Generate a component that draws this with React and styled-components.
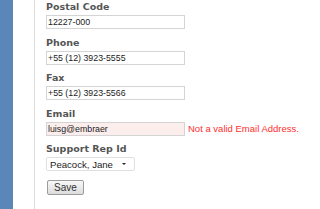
import styled, { createGlobalStyle } from 'styled-components';

const GlobalStyle = createGlobalStyle`
  html, body {
    margin: 0;
    padding: 0;
    background: #fff;
  }
  body {
    font-family: "Liberation Sans", Arial, sans-serif;
    font-size: 10px;
  }
`;

const Page = styled.div`
  display: flex;
  width: 320px;
  height: 209px;
  overflow: hidden;
`;

const Sidebar = styled.div`
  width: 13px;
  flex: none;
  background: #5b87b8;
`;

const Gutter = styled.div`
  width: 21px;
  flex: none;
`;

const Main = styled.div`
  flex: 1;
  border-left: 1px solid #dedede;
  padding: 1px 0 0 11px;
`;

const Field = styled.div`
  margin-bottom: ${(p) => (p.$gap === undefined ? 7.5 : p.$gap)}px;
`;

const Label = styled.div`
  font-family: "DejaVu Sans", Verdana, sans-serif;
  font-weight: bold;
  font-size: 9.5px;
  line-height: 11px;
  color: #555;
  margin-bottom: 3px;
`;

const Row = styled.div`
  display: flex;
  align-items: center;
  gap: 3px;
`;

const TextInput = styled.input`
  display: block;
  box-sizing: border-box;
  width: 139px;
  height: 14px;
  margin: 0;
  padding: 0 1px;
  border: 1px solid #d4d4d4;
  border-radius: 0;
  outline: none;
  background: ${(p) => (p.$invalid ? '#fdeeee' : '#fff')};
  font-family: "Liberation Sans", Arial, sans-serif;
  font-size: 8.8px;
  color: #222;
`;

const ErrorText = styled.span`
  font-family: "Liberation Sans", Arial, sans-serif;
  font-size: 9.5px;
  color: #ff3030;
`;

const SelectWrap = styled.div`
  position: relative;
  width: 89px;
  height: 14px;
`;

const Select = styled.select`
  display: block;
  appearance: none;
  -webkit-appearance: none;
  box-sizing: border-box;
  width: 100%;
  height: 100%;
  margin: 0;
  padding: 0 12px 0 3px;
  border: 1px solid #e0e0e0;
  border-radius: 2px;
  background: #fff;
  outline: none;
  font-family: "Liberation Sans", Arial, sans-serif;
  font-size: 9.6px;
  color: #222;
`;

const Caret = styled.span`
  position: absolute;
  right: 9px;
  top: 6px;
  width: 0;
  height: 0;
  border-left: 2px solid transparent;
  border-right: 2px solid transparent;
  border-top: 2px solid #222;
  pointer-events: none;
`;

const SaveButton = styled.button`
  display: block;
  box-sizing: border-box;
  width: 37px;
  height: 15px;
  margin: 9px 0 0 1px;
  padding: 0;
  border: 1px solid #9c9c9c;
  border-radius: 2px;
  background: linear-gradient(#f8f8f8, #dcdcdc);
  font-family: "Liberation Sans", Arial, sans-serif;
  font-size: 10px;
  line-height: 13px;
  color: #333;
`;

const fields = [
  { label: 'Postal Code', value: '12227-000' },
  { label: 'Phone', value: '+55 (12) 3923-5555' },
  { label: 'Fax', value: '+55 (12) 3923-5566' },
];

export default function App() {
  return (
    <>
      <GlobalStyle />
      <Page>
        <Sidebar />
        <Gutter />
        <Main>
          {fields.map((f) => (
            <Field key={f.label}>
              <Label>{f.label}</Label>
              <TextInput type="text" defaultValue={f.value} />
            </Field>
          ))}
          <Field>
            <Label>Email</Label>
            <Row>
              <TextInput type="text" defaultValue="luisg@embraer" $invalid />
              <ErrorText>Not a valid Email Address.</ErrorText>
            </Row>
          </Field>
          <Field $gap={0}>
            <Label>Support Rep Id</Label>
            <SelectWrap>
              <Select defaultValue="3">
                <option value="3">Peacock, Jane</option>
                <option value="4">Park, Margaret</option>
                <option value="5">Johnson, Steve</option>
              </Select>
              <Caret />
            </SelectWrap>
          </Field>
          <SaveButton type="button">Save</SaveButton>
        </Main>
      </Page>
    </>
  );
}
